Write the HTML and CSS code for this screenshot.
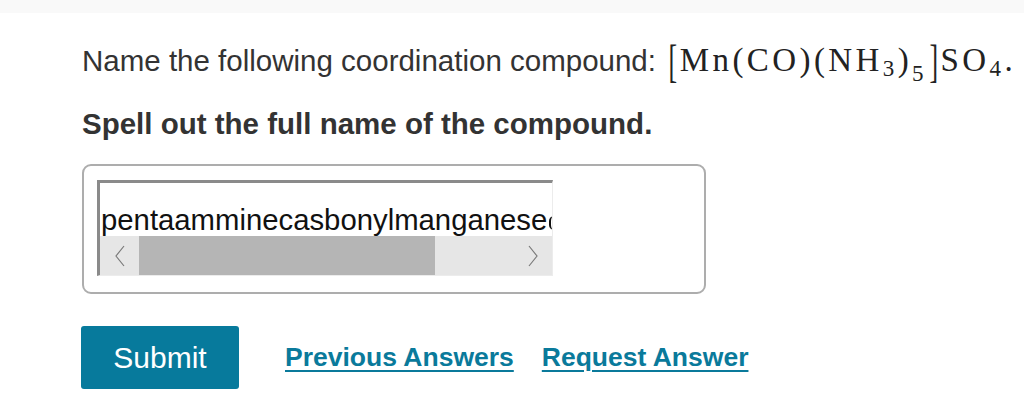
FILE: index.html
```html
<!DOCTYPE html>
<html>
<head>
<meta charset="utf-8">
<link rel="stylesheet" href="styles.css">
</head>
<body>
<div class="topbar"></div>
<main class="content">
  <p class="question">Name the following coordination compound: <span class="formula"><span class="brk">[</span>Mn(CO)(NH<sub>3</sub>)<sub class="sub5">5</sub><span class="brk">]</span>SO<sub>4</sub>.</span></p>
  <p class="instruction">Spell out the full name of the compound.</p>
  <div class="answer-box">
    <div class="field">
      <div class="field-text"><span class="value">pentaamminecasbonylmanganese</span></div>
      <div class="hscroll">
        <span class="arrow">
          <svg width="14" height="24" viewBox="0 0 14 24"><path d="M11 2 L3 12 L11 22" fill="none" stroke="#7a7a7a" stroke-width="1.2"/></svg>
        </span>
        <span class="thumb"></span>
        <span class="track"></span>
        <span class="arrow">
          <svg width="14" height="24" viewBox="0 0 14 24"><path d="M3 2 L11 12 L3 22" fill="none" stroke="#7a7a7a" stroke-width="1.2"/></svg>
        </span>
      </div>
    </div>
  </div>
  <div class="actions">
    <button class="submit">Submit</button>
    <a class="link" href="#">Previous Answers</a>
    <a class="link" href="#">Request Answer</a>
  </div>
</main>
</body>
</html>
```
FILE: styles.css
```css
body {
  margin: 0;
  background: #ffffff;
  font-family: "Liberation Sans", Arial, sans-serif;
  color: #333333;
}
.topbar {
  height: 13px;
  background: #f9f9f9;
}
.content {
  padding-left: 82px;
}
.question {
  margin: 26px 0 0 0;
  font-size: 29.5px;
  line-height: 42px;
  white-space: nowrap;
}
.formula {
  font-family: "Liberation Serif", "DejaVu Serif", serif;
  font-size: 33px;
  letter-spacing: 3.4px;
  color: #222222;
  margin-left: 2px;
}
.formula sub {
  font-size: 23px;
  vertical-align: -5px;
  line-height: 0;
}
.formula .sub5 {
  vertical-align: -10px;
}
.brk {
  display: inline-block;
  font-size: 47px;
  font-weight: 300;
  transform: scaleX(0.55);
  vertical-align: -6px;
  line-height: 0;
  letter-spacing: 0;
  margin: 0 -1px;
}
.instruction {
  margin: 25px 0 0 0;
  font-size: 29.5px;
  font-weight: bold;
  line-height: 34px;
}
.answer-box {
  margin-top: 23px;
  width: 624px;
  height: 130px;
  border: 2px solid #adadad;
  border-radius: 9px;
  box-sizing: border-box;
  padding: 14px 0 0 13px;
}
.field {
  width: 456px;
  height: 96px;
  box-sizing: border-box;
  border-top: 3px solid #8a8a8a;
  border-left: 3px solid #8a8a8a;
  border-right: 1px solid #ececec;
  border-bottom: 1px solid #ececec;
  display: flex;
  flex-direction: column;
}
.field-text {
  flex: 1;
  overflow: hidden;
  white-space: nowrap;
  font-size: 29.3px;
  line-height: 32px;
  color: #111111;
  display: flex;
  align-items: flex-end;
  padding-bottom: 0;
  padding-left: 1px;
}
.value::after {
  content: "";
  display: inline-block;
  width: 3px;
  height: 14px;
  margin-left: 2px;
  border-left: 2.5px solid #111111;
  border-radius: 7px 0 0 7px;
  vertical-align: 0;
}
.hscroll {
  height: 39px;
  background: #e6e6e6;
  display: flex;
  align-items: center;
}
.arrow {
  width: 39px;
  display: flex;
  justify-content: center;
  align-items: center;
}
.thumb {
  width: 296px;
  height: 100%;
  background: #b5b5b5;
}
.track {
  flex: 1;
}
.actions {
  margin-top: 32px;
  display: flex;
  align-items: center;
}
.submit {
  width: 158px;
  height: 63px;
  margin-left: -1px;
  background: #077a9c;
  color: #ffffff;
  border: none;
  border-radius: 3px;
  font-family: "Liberation Sans", Arial, sans-serif;
  font-size: 30px;
  padding: 0;
}
.link {
  font-size: 26.5px;
  font-weight: bold;
  color: #0a7a9b;
  text-decoration: underline;
  text-decoration-thickness: 2px;
  text-underline-offset: 4px;
  margin-left: 28px;
}
.submit + .link {
  margin-left: 46px;
}
```
